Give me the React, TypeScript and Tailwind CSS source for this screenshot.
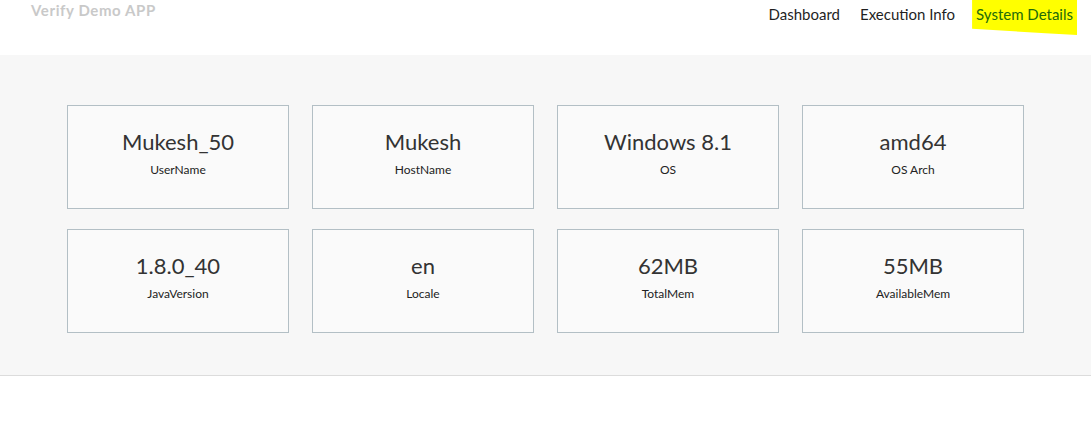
const stats = [
    { value: 'Mukesh_50', label: 'UserName' },
    { value: 'Mukesh', label: 'HostName' },
    { value: 'Windows 8.1', label: 'OS' },
    { value: 'amd64', label: 'OS Arch' },
    { value: '1.8.0_40', label: 'JavaVersion' },
    { value: 'en', label: 'Locale' },
    { value: '62MB', label: 'TotalMem' },
    { value: '55MB', label: 'AvailableMem' },
];

const StatCard = ({ value, label }: { value: string; label: string }) => (
    <div className="flex h-[104px] flex-col items-center border border-[#b3bfc5] bg-[#fafafa] pt-[22px]">
        <span className="text-[22px] leading-[28px] text-[#333]">{value}</span>
        <span className="mt-[7px] text-[12px] leading-[14px] text-[#222]">{label}</span>
    </div>
);

const App = () => {
    return (
        <div className="min-h-[425px] bg-white font-['Lato','Liberation_Sans',sans-serif]">
            <header className="flex h-[55px] items-start justify-between">
                <span className="ml-[31px] mt-[1px] text-[15px] font-bold leading-[18px] tracking-[0.6px] text-[#c9c9c9]">
                    Verify Demo APP
                </span>
                <nav className="mr-[14px] flex items-start gap-[20px] text-[15px] leading-[18px] text-[#1f1f1f]">
                    <span className="mt-[5px]">Dashboard</span>
                    <span className="mt-[5px]">Execution Info</span>
                    <span className="-ml-[3px] bg-[#ffff00] px-[4px] pb-[12px] pt-[5px] text-[#236b0a] [clip-path:polygon(0_0,100%_0,100%_100%,70%_95%,0_82%)]">
                        System Details
                    </span>
                </nav>
            </header>
            <section className="border-b border-[#dcdcdc] bg-[#f7f7f7] pb-[42px] pt-[50px]">
                <div className="mx-auto grid w-[957px] grid-cols-4 gap-x-[23px] gap-y-[20px]">
                    {stats.map((s) => (
                        <StatCard key={s.label} value={s.value} label={s.label} />
                    ))}
                </div>
            </section>
        </div>
    );
};

export default App;
